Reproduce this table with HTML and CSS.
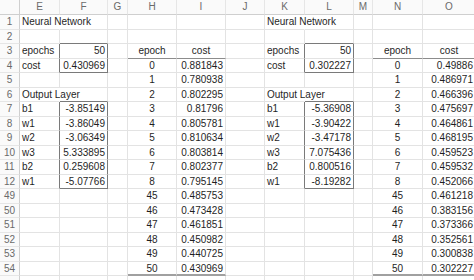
FILE: index.html
```html
<!DOCTYPE html>
<html>
<head>
<meta charset="utf-8">
<link rel="stylesheet" href="styles.css">
</head>
<body>
<div class="sheet">
  <div class="c hd corner"></div><div class="c hd">E</div><div class="c hd">F</div><div class="c hd">G</div><div class="c hd">H</div><div class="c hd">I</div><div class="c hd">J</div><div class="c hd">K</div><div class="c hd">L</div><div class="c hd">M</div><div class="c hd">N</div><div class="c hd">O</div>

  <div class="c rh">1</div><div class="c nb">Neural Network</div><div class="c"></div><div class="c"></div><div class="c"></div><div class="c"></div><div class="c"></div><div class="c nb">Neural Network</div><div class="c"></div><div class="c"></div><div class="c"></div><div class="c"></div>

  <div class="c rh">2</div><div class="c"></div><div class="c bB"></div><div class="c"></div><div class="c"></div><div class="c"></div><div class="c"></div><div class="c"></div><div class="c bB"></div><div class="c"></div><div class="c"></div><div class="c"></div>

  <div class="c rh">3</div><div class="c bR">epochs</div><div class="c bR n">50</div><div class="c"></div><div class="c ctr uB">epoch</div><div class="c ctr uB">cost</div><div class="c"></div><div class="c bR">epochs</div><div class="c bR n">50</div><div class="c"></div><div class="c ctr uB">epoch</div><div class="c ctr uB">cost</div>

  <div class="c rh">4</div><div class="c bR">cost</div><div class="c bR bB n">0.430969</div><div class="c"></div><div class="c ctr">0</div><div class="c n">0.881843</div><div class="c"></div><div class="c bR">cost</div><div class="c bR bB n">0.302227</div><div class="c"></div><div class="c ctr">0</div><div class="c n">0.49886</div>

  <div class="c rh">5</div><div class="c"></div><div class="c"></div><div class="c"></div><div class="c ctr">1</div><div class="c n">0.780938</div><div class="c"></div><div class="c"></div><div class="c"></div><div class="c"></div><div class="c ctr">1</div><div class="c n">0.486971</div>

  <div class="c rh">6</div><div class="c nb">Output Layer</div><div class="c bB"></div><div class="c"></div><div class="c ctr">2</div><div class="c n">0.802295</div><div class="c"></div><div class="c nb">Output Layer</div><div class="c bB"></div><div class="c"></div><div class="c ctr">2</div><div class="c n">0.466396</div>

  <div class="c rh">7</div><div class="c bR">b1</div><div class="c bR n">-3.85149</div><div class="c"></div><div class="c ctr">3</div><div class="c n">0.81796</div><div class="c"></div><div class="c bR">b1</div><div class="c bR n">-5.36908</div><div class="c"></div><div class="c ctr">3</div><div class="c n">0.475697</div>

  <div class="c rh">8</div><div class="c bR">w1</div><div class="c bR n">-3.86049</div><div class="c"></div><div class="c ctr">4</div><div class="c n">0.805781</div><div class="c"></div><div class="c bR">w1</div><div class="c bR n">-3.90422</div><div class="c"></div><div class="c ctr">4</div><div class="c n">0.464861</div>

  <div class="c rh">9</div><div class="c bR">w2</div><div class="c bR n">-3.06349</div><div class="c"></div><div class="c ctr">5</div><div class="c n">0.810634</div><div class="c"></div><div class="c bR">w2</div><div class="c bR n">-3.47178</div><div class="c"></div><div class="c ctr">5</div><div class="c n">0.468195</div>

  <div class="c rh">10</div><div class="c bR">w3</div><div class="c bR n">5.333895</div><div class="c"></div><div class="c ctr">6</div><div class="c n">0.803814</div><div class="c"></div><div class="c bR">w3</div><div class="c bR n">7.075436</div><div class="c"></div><div class="c ctr">6</div><div class="c n">0.459523</div>

  <div class="c rh">11</div><div class="c bR">b2</div><div class="c bR n">0.259608</div><div class="c"></div><div class="c ctr">7</div><div class="c n">0.802377</div><div class="c"></div><div class="c bR">b2</div><div class="c bR n">0.800516</div><div class="c"></div><div class="c ctr">7</div><div class="c n">0.459532</div>

  <div class="c rh">12</div><div class="c bR">w1</div><div class="c bR bB n">-5.07766</div><div class="c"></div><div class="c ctr">8</div><div class="c n">0.795145</div><div class="c"></div><div class="c bR">w1</div><div class="c bR bB n">-8.19282</div><div class="c"></div><div class="c ctr">8</div><div class="c n">0.452066</div>

  <div class="c rh">49</div><div class="c"></div><div class="c"></div><div class="c"></div><div class="c ctr">45</div><div class="c n">0.485753</div><div class="c"></div><div class="c"></div><div class="c"></div><div class="c"></div><div class="c ctr">45</div><div class="c n">0.461218</div>

  <div class="c rh">50</div><div class="c"></div><div class="c"></div><div class="c"></div><div class="c ctr">46</div><div class="c n">0.473428</div><div class="c"></div><div class="c"></div><div class="c"></div><div class="c"></div><div class="c ctr">46</div><div class="c n">0.383156</div>

  <div class="c rh">51</div><div class="c"></div><div class="c"></div><div class="c"></div><div class="c ctr">47</div><div class="c n">0.461851</div><div class="c"></div><div class="c"></div><div class="c"></div><div class="c"></div><div class="c ctr">47</div><div class="c n">0.373366</div>

  <div class="c rh">52</div><div class="c"></div><div class="c"></div><div class="c"></div><div class="c ctr">48</div><div class="c n">0.450982</div><div class="c"></div><div class="c"></div><div class="c"></div><div class="c"></div><div class="c ctr">48</div><div class="c n">0.352561</div>

  <div class="c rh">53</div><div class="c"></div><div class="c"></div><div class="c"></div><div class="c ctr">49</div><div class="c n">0.440725</div><div class="c"></div><div class="c"></div><div class="c"></div><div class="c"></div><div class="c ctr">49</div><div class="c n">0.300838</div>

  <div class="c rh">54</div><div class="c"></div><div class="c"></div><div class="c"></div><div class="c ctr uB2">50</div><div class="c n uB2">0.430969</div><div class="c"></div><div class="c"></div><div class="c"></div><div class="c"></div><div class="c ctr uB2">50</div><div class="c n uB2">0.302227</div>

  <div class="c rh"></div><div class="c"></div><div class="c"></div><div class="c"></div><div class="c"></div><div class="c"></div><div class="c"></div><div class="c"></div><div class="c"></div><div class="c"></div><div class="c"></div><div class="c"></div>
</div>
</body>
</html>
```
FILE: styles.css
```css
* { box-sizing: border-box; }
body {
  margin: 0;
  background: #ffffff;
  font-family: "Liberation Sans", Arial, sans-serif;
  font-size: 10px;
  color: #1f1f1f;
}
.sheet {
  display: grid;
  grid-template-columns: 20px 40px 48px 20px 49px 49px 39px 40px 49px 19px 50px 53px;
  grid-template-rows: 15px repeat(19, 14.5px);
  width: 474px;
  height: 280px;
  overflow: hidden;
}
.c {
  border-right: 1px solid #e3e3e3;
  border-bottom: 1px solid #e3e3e3;
  padding: 0 2px;
  white-space: nowrap;
  line-height: 13.5px;
  overflow: visible;
}
.hd {
  background: #fafafa;
  color: #6a6a6a;
  text-align: center;
  line-height: 14px;
  border-right-color: #e6e6e6;
  border-bottom-color: #cfcfcf;
}
.rh {
  background: #fafafa;
  color: #6a6a6a;
  text-align: center;
  padding: 0;
  border-right-color: #cfcfcf;
  border-bottom-color: #e6e6e6;
}
.corner { border-right-color: #cfcfcf; }
.nb { border-right-color: transparent; }
.n { text-align: right; }
.ctr { text-align: center; }
.bR { border-right-color: #7a7a7a; }
.bB { border-bottom-color: #7a7a7a; }
.uB { border-bottom-color: #8c8c8c; }
.uB2 { border-bottom: 2px solid #a0a0a0; }
```
